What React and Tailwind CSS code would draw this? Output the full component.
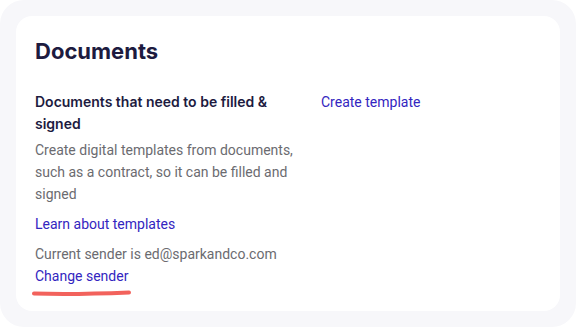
export default function App() {
  return (
    <div className="w-[576px] h-[327px] bg-white">
      <div className="h-full rounded-[24px] bg-[#f7f7fa] p-4">
        <div className="h-full rounded-[16px] bg-white pl-[19px] pr-6 pt-[20px]">
          <h1 className="font-['Inter',sans-serif] text-[22px] font-bold leading-[30px] text-[#1d1b3f]">
            Documents
          </h1>
          <div className="mt-[25px] flex gap-6 font-['Roboto',sans-serif] text-[14px] leading-[22px]">
            <div className="w-[262px]">
              <h2 className="font-['Inter',sans-serif] font-semibold text-[#1d1b3f]">
                Documents that need to be filled &amp; signed
              </h2>
              <p className="mt-1 text-[#6b6b70]">
                Create digital templates from documents, such as a contract, so it can be filled and signed
              </p>
              <a href="#" className="mt-[8px] block text-[#3325c0]">
                Learn about templates
              </a>
              <p className="mt-[8px] text-[#6b6b70]">Current sender is ed@sparkandco.com</p>
              <div className="relative inline-block">
                <a href="#" className="block text-[#3325c0]">
                  Change sender
                </a>
                <svg
                  className="absolute left-[-3px] top-[24px]"
                  width="100"
                  height="8"
                  viewBox="0 0 100 8"
                  fill="none"
                >
                  <path
                    d="M2 4.5 C 30 5.5, 60 5, 97 3.5"
                    stroke="#f2625c"
                    strokeWidth="4"
                    strokeLinecap="round"
                  />
                </svg>
              </div>
            </div>
            <div>
              <a href="#" className="block text-[#3325c0]">
                Create template
              </a>
            </div>
          </div>
        </div>
      </div>
    </div>
  );
}
